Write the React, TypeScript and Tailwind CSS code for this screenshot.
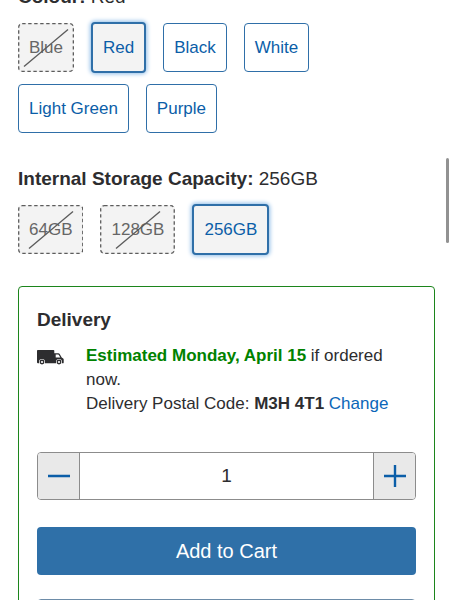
import { useState } from "react";
import clsx from "clsx";

type OptionItem = { label: string; available: boolean };

const colours: OptionItem[] = [
  { label: "Blue", available: false },
  { label: "Red", available: true },
  { label: "Black", available: true },
  { label: "White", available: true },
  { label: "Light Green", available: true },
  { label: "Purple", available: true },
];

const capacities: OptionItem[] = [
  { label: "64GB", available: false },
  { label: "128GB", available: false },
  { label: "256GB", available: true },
];

function UnavailableMark() {
  return (
    <>
      <svg className="absolute -inset-px size-[calc(100%+2px)]" fill="none" aria-hidden="true">
        <rect
          x="0.7"
          y="0.7"
          rx="3.5"
          className="h-[calc(100%-1.4px)] w-[calc(100%-1.4px)]"
          stroke="#5c5c5c"
          strokeWidth="1.3"
          strokeDasharray="3.4 2.6"
        />
      </svg>
      <svg
        className="absolute inset-0 m-auto h-[38px] w-[46px]"
        viewBox="0 0 46 38"
        fill="none"
        aria-hidden="true"
      >
        <path d="M1 37.5 45 .5" stroke="#5c5c5c" strokeWidth="1.3" />
      </svg>
    </>
  );
}

function OptionButton({
  item,
  selected,
  onSelect,
}: {
  item: OptionItem;
  selected: boolean;
  onSelect: () => void;
}) {
  return (
    <button
      type="button"
      disabled={!item.available}
      aria-pressed={selected}
      onClick={onSelect}
      className={clsx(
        "relative rounded px-[10px] text-[17px] leading-6",
        !item.available && "border-transparent bg-[#f3f3f3] text-[#666]",
        item.available && "border-[#2f6fa8] text-[#0b5ea8]",
        selected
          ? "-my-px h-[51px] border-2 bg-[#f3f3f3] shadow-[0_0_4px_1px_#8fbde8]"
          : "h-[49px] border"
      )}
    >
      {item.label}
      {!item.available && <UnavailableMark />}
    </button>
  );
}

function OptionGroup({
  title,
  items,
  value,
  onChange,
}: {
  title: string;
  items: OptionItem[];
  value: string;
  onChange: (value: string) => void;
}) {
  return (
    <section className="mb-8">
      <h2 className="text-[19px] leading-7">
        <span className="font-bold">{title}:</span> {value}
      </h2>
      <div className="mt-3 flex flex-wrap gap-x-[17px] gap-y-3">
        {items.map((item) => (
          <OptionButton
            key={item.label}
            item={item}
            selected={item.label === value}
            onSelect={() => onChange(item.label)}
          />
        ))}
      </div>
    </section>
  );
}

function TruckIcon() {
  return (
    <svg className="h-[15px] w-[27px]" viewBox="0 0 27 15" aria-hidden="true">
      <path
        fill="#2d2d2f"
        fillRule="evenodd"
        d="M.8 0H16.5q.8 0 .8.8V3.200H21.400q.8 0 1.300.7L24.700 7.600 26.200 8.600q.5.4.5 1V12.400q0 .9-.9.900H1Q0 13.300 0 12.300V.8Q0 0 .8 0ZM18.700 4.400V7.600H23.300L21.700 4.800Q21.500 4.400 21 4.400Z"
      />
      <circle cx="5" cy="12" r="3" fill="#fff" />
      <circle cx="5" cy="12" r="2.400" fill="#2d2d2f" />
      <circle cx="5" cy="12" r="1.100" fill="#fff" />
      <circle cx="22" cy="12" r="3" fill="#fff" />
      <circle cx="22" cy="12" r="2.400" fill="#2d2d2f" />
      <circle cx="22" cy="12" r="1.100" fill="#fff" />
    </svg>
  );
}

function QuantityPicker() {
  const [quantity, setQuantity] = useState(1);

  return (
    <div className="mt-9 flex h-12 overflow-hidden rounded border border-[#8c8c8c]">
      <button
        type="button"
        aria-label="Decrease quantity"
        onClick={() => setQuantity(Math.max(1, quantity - 1))}
        className="flex w-[42px] shrink-0 items-center justify-center border-r border-[#8c8c8c] bg-[#e9e9e9]"
      >
        <svg className="size-[22px]" viewBox="0 0 22 22" aria-hidden="true">
          <path d="M0 11H22" stroke="#0b5ea8" strokeWidth="2.4" />
        </svg>
      </button>
      <input
        type="text"
        inputMode="numeric"
        aria-label="Quantity"
        value={quantity}
        onChange={(e) => setQuantity(Number(e.target.value) || 1)}
        className="min-w-0 flex-1 bg-white text-center text-[19px]"
      />
      <button
        type="button"
        aria-label="Increase quantity"
        onClick={() => setQuantity(quantity + 1)}
        className="flex w-[42px] shrink-0 items-center justify-center border-l border-[#8c8c8c] bg-[#e9e9e9]"
      >
        <svg className="size-[22px]" viewBox="0 0 22 22" aria-hidden="true">
          <path d="M0 11H22M11 0V22" stroke="#0b5ea8" strokeWidth="2.4" />
        </svg>
      </button>
    </div>
  );
}

export default function App() {
  const [colour, setColour] = useState("Red");
  const [capacity, setCapacity] = useState("256GB");

  return (
    <div className="relative h-screen overflow-hidden bg-white font-['Liberation_Sans',Arial,sans-serif] text-[#2d2d2f]">
      <main className="-mt-[17px] px-[18px]">
        <OptionGroup title="Colour" items={colours} value={colour} onChange={setColour} />
        <OptionGroup
          title="Internal Storage Capacity"
          items={capacities}
          value={capacity}
          onChange={setCapacity}
        />
        <section className="rounded border border-[#1c851c] px-[18px] pt-[21px] pb-6">
          <h2 className="text-[19px] leading-6 font-bold">Delivery</h2>
          <div className="mt-3 flex gap-[22px] text-[17px] leading-6">
            <div className="shrink-0 pt-[6px]">
              <TruckIcon />
            </div>
            <div>
              <p>
                <span className="font-bold text-[#008200]">Estimated Monday, April 15</span> if
                ordered now.
              </p>
              <p>
                Delivery Postal Code: <span className="font-bold">M3H 4T1</span>{" "}
                <a href="#change" className="text-[#0b66b8]">
                  Change
                </a>
              </p>
            </div>
          </div>
          <QuantityPicker />
          <button
            type="button"
            className="mt-[27px] h-12 w-full rounded bg-[#2f70a8] text-xl text-white"
          >
            Add to Cart
          </button>
          <button
            type="button"
            aria-label="Reserve in store"
            className="mt-6 h-12 w-full rounded border border-[#6d8ca8] bg-white"
          />
        </section>
      </main>
      {/* scroll indicator */}
      <div className="absolute top-[158px] right-1 h-[85px] w-[3px] rounded-full bg-[#929292]" />
    </div>
  );
}
